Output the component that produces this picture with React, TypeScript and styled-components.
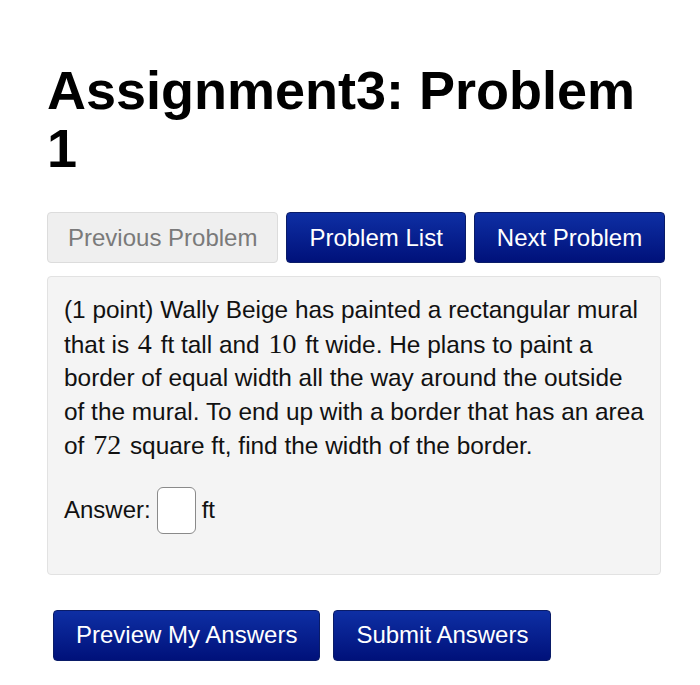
import React from 'react';
import styled, { createGlobalStyle } from 'styled-components';

const GlobalStyle = createGlobalStyle`
  body {
    margin: 0;
    background: #ffffff;
    font-family: "Liberation Sans", Arial, Helvetica, sans-serif;
    color: #111;
  }
`;

const Page = styled.div`
  width: 614px;
  padding: 61px 0 0 47px;
`;

const Title = styled.h1`
  margin: 0;
  font-size: 54px;
  line-height: 58px;
  font-weight: bold;
  color: #000;
`;

const NavRow = styled.div`
  display: flex;
  gap: 8px;
  margin-top: 35px;
`;

const Button = styled.button<{ $disabled?: boolean }>`
  flex-shrink: 0;
  height: 51px;
  padding: 0 ${(p) => (p.$disabled ? '20px' : '22px')};
  white-space: nowrap;
  font-family: "Liberation Sans", Arial, Helvetica, sans-serif;
  font-size: 24px;
  border-radius: 4px;
  cursor: pointer;
  color: ${(p) => (p.$disabled ? '#7a7a7a' : '#ffffff')};
  background: ${(p) =>
    p.$disabled ? '#efefef' : 'linear-gradient(#0e2fa4, #00117a)'};
  border: 1px solid ${(p) => (p.$disabled ? '#dcdcdc' : '#0a1c68')};
`;

const Panel = styled.div`
  margin-top: 13px;
  padding: 16px;
  background: #f4f4f4;
  border: 1px solid #e2e2e2;
  border-radius: 4px;
`;

const ProblemText = styled.p`
  margin: 0;
  font-size: 24.4px;
  line-height: 33.5px;
  color: #111;
`;

const Num = styled.span`
  font-family: "Liberation Serif", "Times New Roman", serif;
  font-size: 28px;
  margin: 0 2px;
`;

const AnswerRow = styled.div`
  display: flex;
  align-items: center;
  gap: 6px;
  margin-top: 24px;
  margin-bottom: 24px;
  font-size: 24px;
  color: #111;
`;

const AnswerBox = styled.input`
  width: 39px;
  height: 47px;
  box-sizing: border-box;
  border: 1.5px solid #8a8a8a;
  border-radius: 6px;
  background: #fff;
  padding: 0;
`;

const SubmitRow = styled.div`
  display: flex;
  gap: 13px;
  margin: 35px 0 0 6px;
`;

const App: React.FC = () => {
  return (
    <Page>
      <GlobalStyle />
      <Title>Assignment3: Problem 1</Title>
      <NavRow>
        <Button $disabled>Previous Problem</Button>
        <Button>Problem List</Button>
        <Button>Next Problem</Button>
      </NavRow>
      <Panel>
        <ProblemText>
          (1 point) Wally Beige has painted a rectangular mural that is <Num>4</Num> ft tall and{' '}
          <Num>10</Num> ft wide. He plans to paint a border of equal width all the way around the
          outside of the mural. To end up with a border that has an area of <Num>72</Num> square
          ft, find the width of the border.
        </ProblemText>
        <AnswerRow>
          Answer:
          <AnswerBox type="text" />
          ft
        </AnswerRow>
      </Panel>
      <SubmitRow>
        <Button>Preview My Answers</Button>
        <Button>Submit Answers</Button>
      </SubmitRow>
    </Page>
  );
};

export default App;
